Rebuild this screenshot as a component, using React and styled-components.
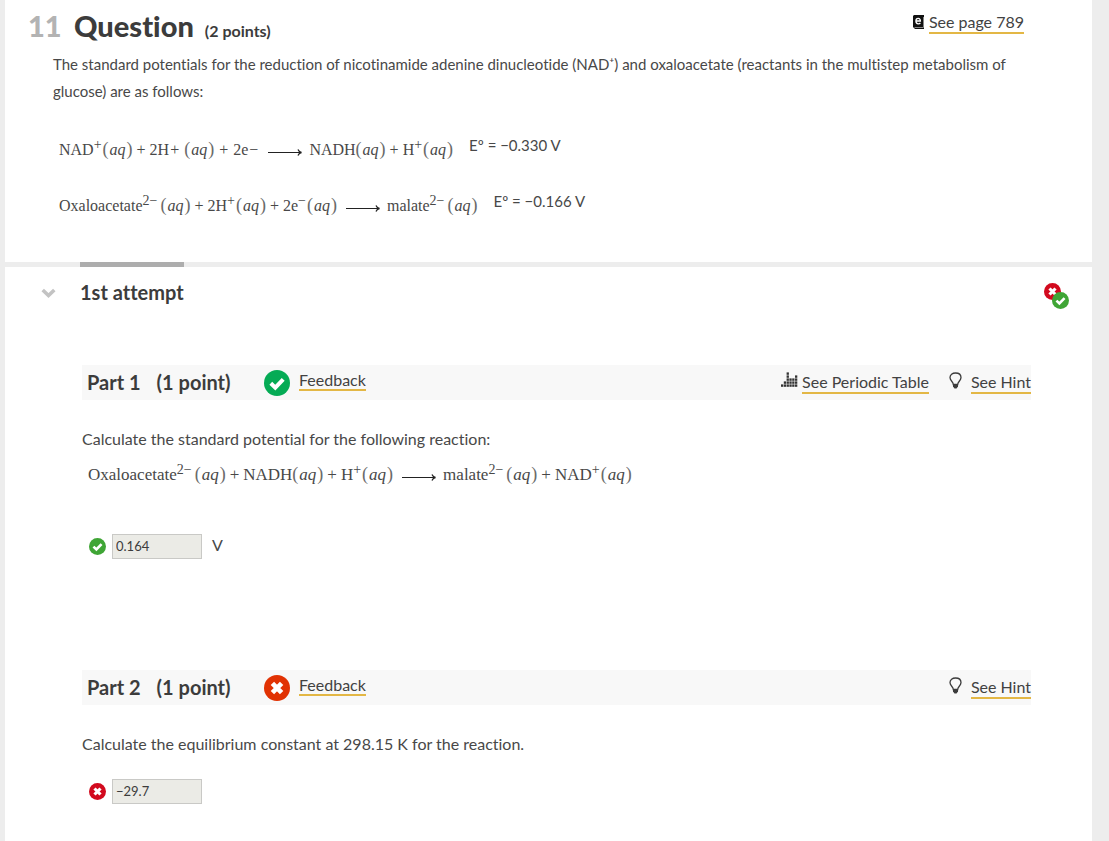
import React from "react";
import styled, { createGlobalStyle } from "styled-components";

const GlobalStyle = createGlobalStyle`
  * { box-sizing: border-box; }
  body {
    margin: 0;
    background: #ededed;
    color: #484848;
    font: 15px/27px Lato, "Liberation Sans", sans-serif;
    font-variant-ligatures: none;
  }
  h1, h2, h3, p { margin: 0; }
  svg { display: block; flex: none; }
`;

const Page = styled.main`
  min-height: 100vh;
  margin: 0 17px 0 5px;
  background: #fff;
`;

const Header = styled.header`
  display: flex;
  justify-content: space-between;
  align-items: flex-start;
  padding: 8px 68px 0 23px;
`;

const Title = styled.h1`
  display: flex;
  align-items: baseline;
  font-size: 29px;
  line-height: 36px;
  font-weight: 900;
  color: #3c3c3c;
`;

const QuestionNumber = styled.span`
  width: 46px;
  color: #b3b3b3;
`;

const Points = styled.span`
  margin-left: 11px;
  font-size: 16px;
  font-weight: 700;
`;

const Link = styled.a`
  border-bottom: 2px solid #e3b745;
  color: #424242;
  font-size: 16px;
  line-height: 20px;
  text-decoration: none;
`;

const LinkGroup = styled.div`
  display: flex;
  align-items: flex-start;
  gap: ${(p) => p.$gap}px;
  padding-top: ${(p) => p.$top || 0}px;
`;

const Statement = styled.section`
  padding: 2px 64px 31px 48px;
`;

const Text = styled.p`
  font-size: ${(p) => p.$size || 15}px;
  line-height: 27px;
`;

const Reactions = styled.div`
  padding: 14px 0 0 6px;
`;

const ReactionRow = styled.div`
  display: flex;
  align-items: flex-start;
  gap: 16px;
  height: 56px;
  padding-top: 13px;
`;

const Equation = styled.div`
  display: flex;
  align-items: baseline;
  padding-top: 4px;
  font: ${(p) => p.$size || 16}px/27px "Liberation Serif", serif;
  white-space: nowrap;
`;

const Calculation = styled.div`
  padding: 4px 0 1px 6px;
`;

const Charge = styled.span`
  position: relative;
  top: -6px;
  margin-right: ${(p) => (p.$wide ? 3 : 1)}px;
  font-size: 14px;
  line-height: 1;
`;

const Paren = styled.span`
  font-size: 18px;
  line-height: 1;
  color: #6a6a6a;
`;

const Phase = styled.i`
  padding: 0 1px;
`;

const Sign = styled.span`
  margin: 0 ${(p) => (p.$tight ? 1 : 4)}px;
`;

const ArrowBox = styled.span`
  align-self: center;
  margin: 5px 6px 0 8px;
`;

const AttemptSection = styled.section`
  border-top: 5px solid #ededed;
`;

const AttemptBar = styled.div`
  display: flex;
  justify-content: space-between;
  padding: 0 23px 0 36px;
`;

const AttemptToggle = styled.button`
  display: flex;
  align-items: center;
  gap: 24px;
  margin: -5px 0 0;
  padding: 0;
  border: 0;
  background: none;
  color: #3c3c3c;
  font: 700 20px/24px Lato, sans-serif;
  font-variant-ligatures: none;
  cursor: pointer;
`;

const ChevronBox = styled.span`
  padding-top: 8px;
`;

const AttemptLabel = styled.span`
  padding: 13px 0;
  border-top: 5px solid #adadad;
`;

const ResultBadges = styled.div`
  display: flex;
  padding-top: 16px;
`;

const BadgeOver = styled.span`
  margin: 9px 0 0 -9px;
`;

const Part = styled.section`
  padding: ${(p) => p.$top}px 61px 0 77px;
`;

const PartBar = styled.header`
  display: flex;
  align-items: center;
  height: 35px;
  padding-left: 5px;
  background: #f8f8f8;
`;

const PartTitle = styled.h2`
  display: flex;
  gap: 16px;
  width: 177px;
  padding-bottom: 2px;
  font-size: 20px;
  line-height: 24px;
  font-weight: 700;
  color: #3c3c3c;
`;

const Feedback = styled(Link)`
  margin: 0 auto 3px 9px;
  line-height: 18px;
`;

const HelpLinks = styled.nav`
  display: flex;
  gap: 20px;
`;

const PartBody = styled.div`
  padding-top: 25px;
`;

const AnswerRow = styled.div`
  display: flex;
  align-items: center;
  gap: 6px;
  padding: ${(p) => p.$top}px 0 0 7px;
`;

const AnswerInput = styled.input`
  width: 90px;
  height: 25px;
  padding: 0 3px 2px;
  border: 1px solid #c9c9c6;
  border-radius: 0;
  background: #ebebe6;
  color: #3c3c3c;
  font: 13px Lato, sans-serif;
`;

const Unit = styled.span`
  margin-left: 4px;
  padding-bottom: 4px;
  font-size: 16px;
  line-height: 20px;
`;

const Aq = () => (
  <span><Paren>(</Paren><Phase>aq</Phase><Paren>)</Paren></span>
);

const Species = ({ name, charge }) => (
  <span>
    {name}
    {charge && <Charge $wide={charge.length > 1}>{charge}</Charge>}
    <Aq />
  </span>
);

const Arrow = () => (
  <ArrowBox>
    <svg width="36" height="8" viewBox="0 0 36 8" fill="none" stroke="#222" aria-label="yields">
      <path d="M1 4.5H34" strokeWidth="1.2" />
      <path d="M31 1.5Q32 4 34.5 4.5Q32 5 31 7.5" strokeWidth="1.3" />
    </svg>
  </ArrowBox>
);

const StatusIcon = ({ ok, size, color }) => (
  <svg width={size} height={size} viewBox="0 0 26 26" aria-label={ok ? "Correct" : "Incorrect"}>
    <circle cx="13" cy="13" r="13" fill={color} />
    {ok ? (
      <path d="M6.8 13.2L11.3 17.6L19.2 9.3" fill="none" stroke="#fff" strokeWidth="4" />
    ) : (
      <path d="M8.4 8.4L17.6 17.6M17.6 8.4L8.4 17.6" fill="none" stroke="#fff" strokeWidth="4.8" />
    )}
  </svg>
);

const BookIcon = () => (
  <svg width="11" height="17" viewBox="0 -3 11 17" aria-hidden="true">
    <path d="M1 0H11V14H2L0 12V1Z" fill="#111" />
    <path d="M1.5 12.5H10.5V2" fill="none" stroke="#888" />
    <path d="M3 6H7.4Q7.4 3.4 5.2 3.4Q2.9 3.4 2.9 6Q2.9 8.8 5.3 8.8Q6.6 8.8 7.4 8" fill="none" stroke="#fff" strokeWidth="1.3" />
  </svg>
);

const TABLE_COLUMNS = [1, 2, 5, 3, 3, 4];

const TableIcon = () => (
  <svg width="17" height="16" viewBox="0 0 17 16" fill="#333" aria-hidden="true">
    {TABLE_COLUMNS.flatMap((count, col) =>
      Array.from({ length: count }, (_, row) => (
        <rect key={`${col}-${row}`} x={col * 2.8} y={12.4 - row * 3} width="2.3" height="2.4" />
      ))
    )}
  </svg>
);

const BulbIcon = () => (
  <svg width="13" height="17" viewBox="0 0 13 17" fill="none" stroke="#3c3c3c" aria-hidden="true">
    <path d="M4.3 12.5C4.3 9.8 1 8.6 1 5.6C1 2.6 3.4 1 6.5 1S12 2.6 12 5.6C12 8.6 8.7 9.8 8.7 12.5Z" strokeWidth="1.3" />
    <path d="M4 12.5H9V14.5L7.5 16.5H5.5L4 14.5Z" fill="#3c3c3c" stroke="none" />
  </svg>
);

const Chevron = () => (
  <svg width="15" height="11" viewBox="0 0 15 11" fill="none" stroke="#c3c3c3" strokeWidth="3.6" aria-hidden="true">
    <path d="M1.7 2L7.5 7.5L13.3 2" />
  </svg>
);

const PartHeader = ({ number, ok, periodicTable }) => (
  <PartBar>
    <PartTitle>
      <span>Part {number}</span>
      <span>(1 point)</span>
    </PartTitle>
    <StatusIcon ok={ok} size={26} color={ok ? "#05ab55" : "#e13203"} />
    <Feedback href="#feedback">Feedback</Feedback>
    <HelpLinks>
      {periodicTable && (
        <LinkGroup $gap={4}>
          <TableIcon />
          <Link href="#table">See Periodic Table</Link>
        </LinkGroup>
      )}
      <LinkGroup $gap={9}>
        <BulbIcon />
        <Link href="#hint">See Hint</Link>
      </LinkGroup>
    </HelpLinks>
  </PartBar>
);

export default function App() {
  return (
    <>
      <GlobalStyle />
      <Page>
        <Header>
          <Title>
            <QuestionNumber>11</QuestionNumber>
            Question
            <Points>(2 points)</Points>
          </Title>
          <LinkGroup $gap={5} $top={4}>
            <BookIcon />
            <Link href="#page-789">See page 789</Link>
          </LinkGroup>
        </Header>
        <Statement>
          <Text>
            The standard potentials for the reduction of nicotinamide adenine dinucleotide (NAD⁺) and
            oxaloacetate (reactants in the multistep metabolism of glucose) are as follows:
          </Text>
          <Reactions>
            <ReactionRow>
              <Equation>
                <Species name="NAD" charge="+" />
                <Sign>+</Sign>
                <span>2H</span>
                <Sign $tight>+</Sign>
                <Sign><Aq /></Sign>
                <Sign $tight>+</Sign>
                <span>&nbsp;2e</span>
                <Sign $tight>−</Sign>
                <Arrow />
                <Species name="NADH" />
                <Sign>+</Sign>
                <Species name="H" charge="+" />
              </Equation>
              <Text>Eº = −0.330 V</Text>
            </ReactionRow>
            <ReactionRow>
              <Equation>
                <Species name="Oxaloacetate" charge="2−" />
                <Sign>+</Sign>
                <Species name="2H" charge="+" />
                <Sign>+</Sign>
                <Species name="2e" charge="−" />
                <Arrow />
                <Species name="malate" charge="2−" />
              </Equation>
              <Text>Eº = −0.166 V</Text>
            </ReactionRow>
          </Reactions>
        </Statement>

        <AttemptSection>
          <AttemptBar>
            <AttemptToggle type="button" aria-expanded="true">
              <ChevronBox><Chevron /></ChevronBox>
              <AttemptLabel>1st attempt</AttemptLabel>
            </AttemptToggle>
            <ResultBadges>
              <StatusIcon size={17} color="#d20a1e" />
              <BadgeOver><StatusIcon ok size={17} color="#3fa535" /></BadgeOver>
            </ResultBadges>
          </AttemptBar>

          <Part $top={48}>
            <PartHeader number={1} ok periodicTable />
            <PartBody>
              <Text $size={16} as="label" htmlFor="answer-1">
                Calculate the standard potential for the following reaction:
              </Text>
              <Calculation>
                <Equation $size={17}>
                  <Species name="Oxaloacetate" charge="2−" />
                  <Sign>+</Sign>
                  <Species name="NADH" />
                  <Sign>+</Sign>
                  <Species name="H" charge="+" />
                  <Arrow />
                  <Species name="malate" charge="2−" />
                  <Sign>+</Sign>
                  <Species name="NAD" charge="+" />
                </Equation>
              </Calculation>
              <AnswerRow $top={45}>
                <StatusIcon ok size={17} color="#3fa535" />
                <AnswerInput id="answer-1" defaultValue="0.164" readOnly />
                <Unit>V</Unit>
              </AnswerRow>
            </PartBody>
          </Part>

          <Part $top={111}>
            <PartHeader number={2} />
            <PartBody>
              <Text $size={16} as="label" htmlFor="answer-2">
                Calculate the equilibrium constant at 298.15 K for the reaction.
              </Text>
              <AnswerRow $top={21}>
                <StatusIcon size={17} color="#d20a1e" />
                <AnswerInput id="answer-2" defaultValue="−29.7" readOnly />
              </AnswerRow>
            </PartBody>
          </Part>
        </AttemptSection>
      </Page>
    </>
  );
}
